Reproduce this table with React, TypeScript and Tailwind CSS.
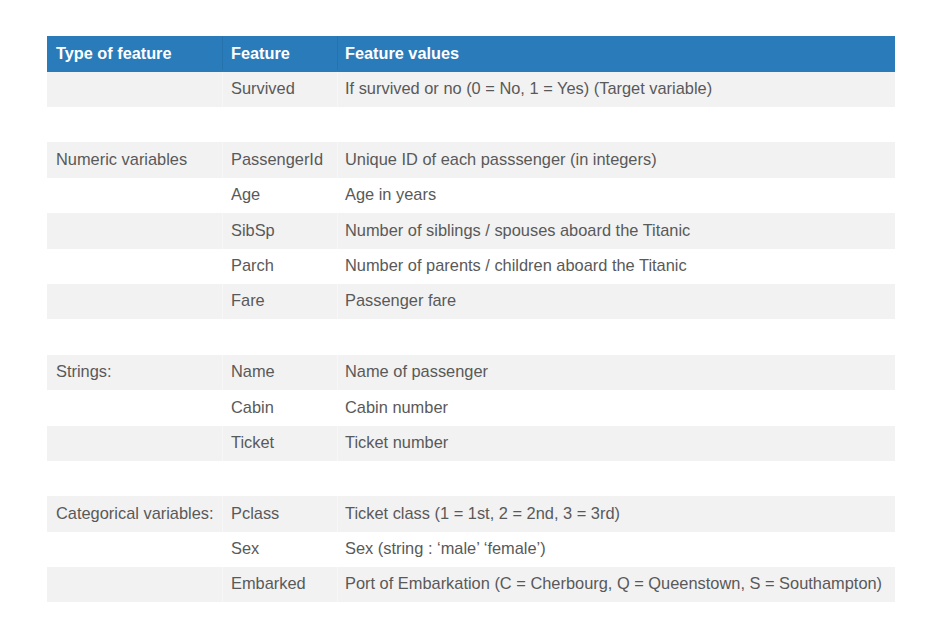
import React from "react";

type Row = { t?: string; f?: string; v?: string; blank?: boolean };

const rows: Row[] = [
  { f: "Survived", v: "If survived or no (0 = No, 1 = Yes) (Target variable)" },
  { blank: true },
  { t: "Numeric variables", f: "PassengerId", v: "Unique ID of each passsenger (in integers)" },
  { f: "Age", v: "Age in years" },
  { f: "SibSp", v: "Number of siblings / spouses aboard the Titanic" },
  { f: "Parch", v: "Number of parents / children aboard the Titanic" },
  { f: "Fare", v: "Passenger fare" },
  { blank: true },
  { t: "Strings:", f: "Name", v: "Name of passenger" },
  { f: "Cabin", v: "Cabin number" },
  { f: "Ticket", v: "Ticket number" },
  { blank: true },
  { t: "Categorical variables:", f: "Pclass", v: "Ticket class (1 = 1st, 2 = 2nd, 3 = 3rd)" },
  { f: "Sex", v: "Sex (string : \u2018male\u2019 \u2018female\u2019)" },
  { f: "Embarked", v: "Port of Embarkation (C = Cherbourg, Q = Queenstown, S = Southampton)" },
];

export default function App() {
  return (
    <div className="w-[940px] h-[644px] bg-white pt-[36px] pl-[47px]" style={{ fontFamily: '"Liberation Sans", Arial, sans-serif' }}>
      <div className="w-[848px] flex flex-col">
        <div className="flex h-[35.6px] bg-[#2a7bba] text-white font-bold text-[16.3px] items-center pb-[2px]">
          <div className="w-[175px] pl-[9px]">Type of feature</div>
          <div className="w-[115px] pl-[8px] h-full flex items-center border-l border-[#2672ad]">Feature</div>
          <div className="flex-1 pl-[7px] h-full flex items-center border-l border-[#2672ad]">Feature values</div>
        </div>
        {rows.map((r, i) => {
          const gray = i % 2 === 0;
          return (
            <div
              key={i}
              className={`flex h-[35.4px] items-center text-[16.4px] text-[#595959] ${gray ? "bg-[#f2f2f2]" : "bg-white"}`}
            >
              {r.blank ? null : (
                <>
                  <div className="w-[175px] pl-[9px] pb-[2px] whitespace-nowrap">{r.t ?? ""}</div>
                  <div className={`w-[115px] pl-[8px] pb-[2px] h-full flex items-center border-l ${gray ? "border-[#f7f7f7]" : "border-white"}`}>{r.f}</div>
                  <div className={`flex-1 pl-[7px] pb-[2px] h-full flex items-center border-l whitespace-nowrap ${gray ? "border-[#f7f7f7]" : "border-white"}`}>{r.v}</div>
                </>
              )}
            </div>
          );
        })}
      </div>
    </div>
  );
}
